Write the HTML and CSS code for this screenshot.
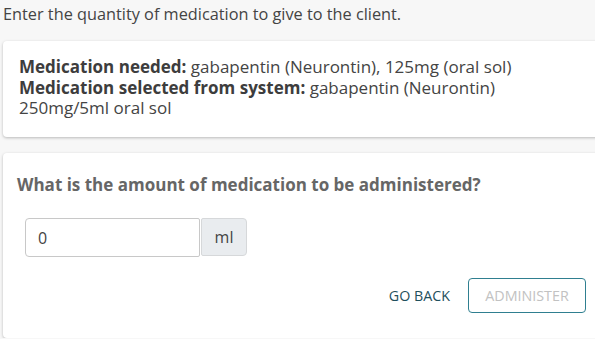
FILE: index.html
```html
<!DOCTYPE html>
<html>
<head>
<meta charset="utf-8">
<link rel="stylesheet" href="styles.css">
</head>
<body>
<div class="page">
  <p class="intro">Enter the quantity of medication to give to the client.</p>
  <div class="card info">
    <div><b>Medication needed:</b> gabapentin (Neurontin), 125mg (oral sol)</div>
    <div><b>Medication selected from system:</b> gabapentin (Neurontin) 250mg/5ml oral sol</div>
  </div>
  <div class="card form">
    <div class="question">What is the amount of medication to be administered?</div>
    <div class="input-group">
      <input class="qty" type="text" value="0">
      <span class="addon">ml</span>
    </div>
    <div class="actions">
      <button class="btn-link">GO BACK</button>
      <button class="btn-outline">ADMINISTER</button>
    </div>
  </div>
</div>
</body>
</html>
```
FILE: styles.css
```css
html, body {
  margin: 0;
  padding: 0;
  background: #f7f7f7;
  overflow: hidden;
}
.page {
  font-family: "Open Sans", "DejaVu Sans", sans-serif;
  font-size: 17px;
  color: #444;
  padding-left: 3px;
  width: 620px;
}
.intro {
  margin: 0;
  padding-top: 3px;
  font-size: 16.3px;
  line-height: 22px;
  color: #444;
}
.card {
  background: #fff;
  border-radius: 4px;
  box-shadow: 0 1px 3px rgba(0,0,0,0.25);
}
.info {
  margin-top: 16px;
  padding: 16px 16px 18px 16px;
  line-height: 20.7px;
}
.info div {
  width: 530px;
}
.info b {
  color: #3d3d3d;
}
.form {
  margin-top: 16px;
  padding: 21px 22px 20px 14px;
  height: 144px;
}
.question {
  font-weight: bold;
  color: #666;
  line-height: 22px;
}
.input-group {
  display: flex;
  margin-top: 22px;
  margin-left: 8px;
}
.qty {
  width: 175px;
  height: 39px;
  box-sizing: border-box;
  border: 1px solid #c8c8c8;
  border-radius: 4px 2px 2px 4px;
  padding: 0 12px;
  font-family: "Open Sans", sans-serif;
  font-size: 16px;
  color: #444;
  outline: none;
}
.addon {
  width: 46px;
  height: 38px;
  box-sizing: border-box;
  margin-left: 1px;
  background: #e9ecef;
  border: 1px solid #d6d8da;
  border-radius: 2px 4px 4px 2px;
  display: flex;
  align-items: center;
  justify-content: center;
  font-size: 16px;
  color: #444;
}
.actions {
  display: flex;
  justify-content: flex-end;
  align-items: center;
  gap: 18px;
  margin-top: 21px;
  width: 569px;
}
.btn-link, .btn-outline {
  font-family: "Open Sans", sans-serif;
  font-size: 14.3px;
  background: transparent;
  cursor: pointer;
}
.btn-link {
  border: none;
  color: #1f4f5c;
  padding: 0;
}
.btn-outline {
  border: 1px solid #2f7f90;
  border-radius: 4px;
  color: #c2c2c2;
  width: 118px;
  height: 35px;
  padding: 0;
}
```
